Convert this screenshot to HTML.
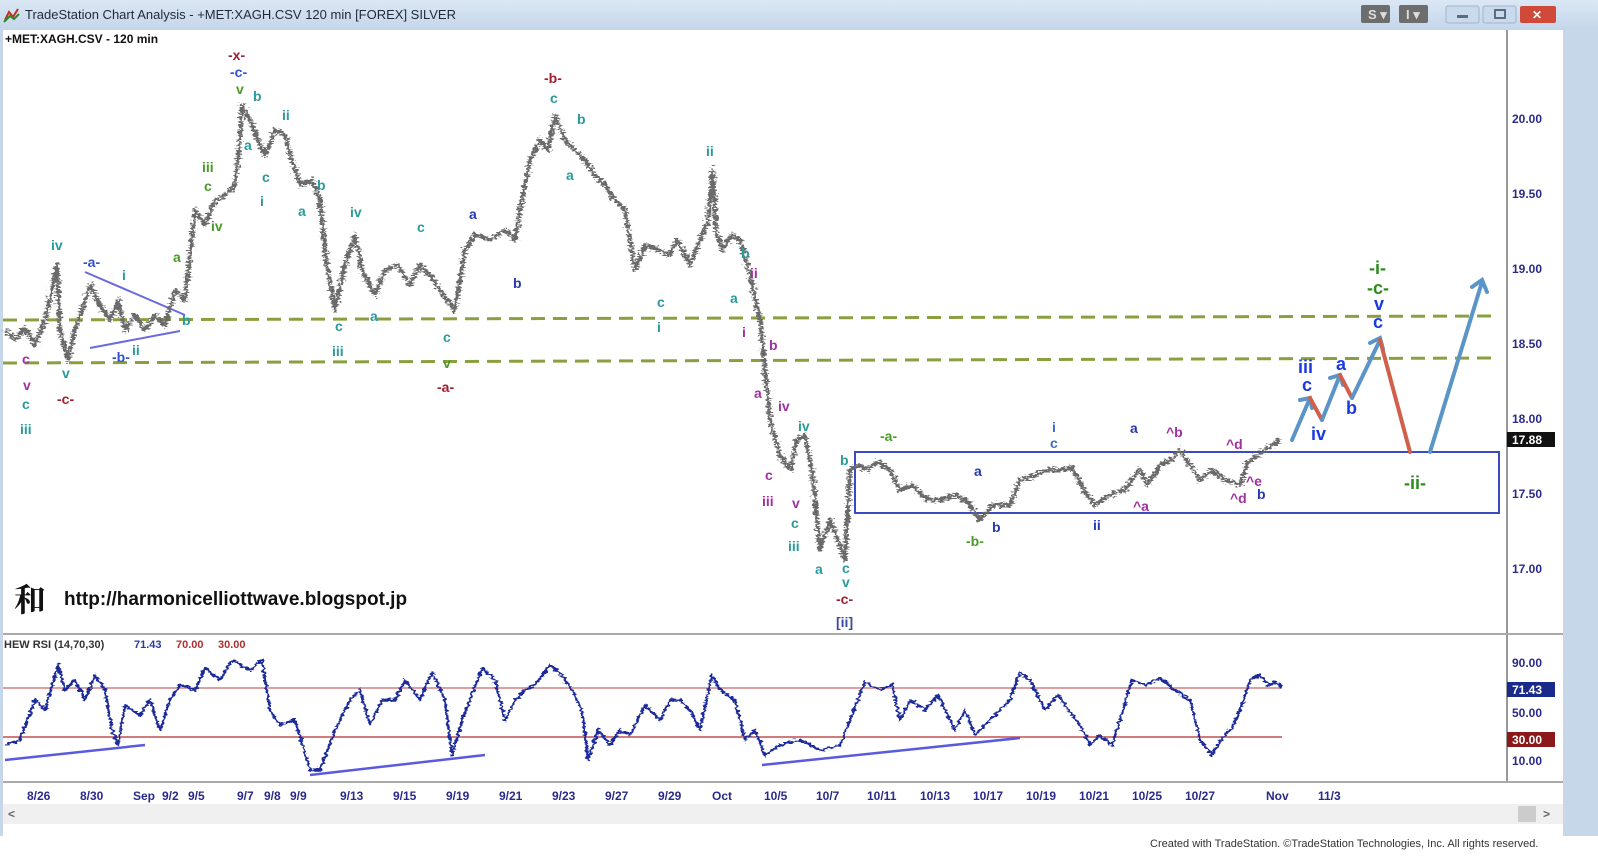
<!DOCTYPE html>
<html><head><meta charset="utf-8"><style>
html,body{margin:0;padding:0;width:1598px;height:866px;overflow:hidden;background:#fff;font-family:"Liberation Sans",Arial,sans-serif}
svg text{font-family:"Liberation Sans",Arial,sans-serif;font-weight:bold}
</style></head><body>
<svg width="1598" height="866" viewBox="0 0 1598 866" xmlns="http://www.w3.org/2000/svg">
<defs>
<linearGradient id="tb" x1="0" y1="0" x2="0" y2="1"><stop offset="0" stop-color="#dbe7f4"/><stop offset="1" stop-color="#c4d6ea"/></linearGradient>
<filter id="jit" x="-5%" y="-10%" width="110%" height="120%"><feTurbulence type="fractalNoise" baseFrequency="0.25 0.6" numOctaves="2" seed="3"/><feDisplacementMap in="SourceGraphic" scale="10" xChannelSelector="R" yChannelSelector="G"/></filter>
<filter id="jit2" x="-5%" y="-10%" width="110%" height="120%"><feTurbulence type="fractalNoise" baseFrequency="0.2 0.4" numOctaves="2" seed="7"/><feDisplacementMap in="SourceGraphic" scale="6" xChannelSelector="R" yChannelSelector="G"/></filter>
</defs>
<rect x="0" y="0" width="1598" height="30" fill="url(#tb)"/>
<path d="M5,20 L9,12 L13,17 L18,9" stroke="#c03020" stroke-width="2" fill="none"/><path d="M4,22 L10,16 L14,19 L19,14" stroke="#2a8a2a" stroke-width="2" fill="none"/>
<text x="25" y="19" font-size="13" fill="#1e2a3a" style="font-weight:normal">TradeStation Chart Analysis - +MET:XAGH.CSV 120 min [FOREX] SILVER</text>
<rect x="1361" y="5" width="29" height="18" rx="2" fill="#6d6d6d"/><text x="1368" y="19" font-size="13" fill="#ddd">S ▾</text>
<rect x="1399" y="5" width="29" height="18" rx="2" fill="#6d6d6d"/><text x="1406" y="19" font-size="13" fill="#ddd">I ▾</text>
<rect x="1446" y="6" width="33" height="17" rx="2" fill="#c9daec" stroke="#9fb4cc"/><rect x="1457" y="15" width="11" height="3" fill="#5a6c84"/>
<rect x="1483" y="6" width="33" height="17" rx="2" fill="#c9daec" stroke="#9fb4cc"/><rect x="1495" y="10" width="10" height="8" fill="none" stroke="#5a6c84" stroke-width="2"/>
<rect x="1520" y="6" width="36" height="17" rx="2" fill="#d04a3a"/><text x="1532" y="19" font-size="12" fill="#fff">✕</text>
<rect x="1563" y="30" width="35" height="806" fill="#c6d7ea"/>
<rect x="0" y="30" width="3" height="806" fill="#c6d7ea"/>
<line x1="1507" y1="30" x2="1507" y2="782" stroke="#999" stroke-width="2"/>
<line x1="3" y1="634" x2="1563" y2="634" stroke="#aaa" stroke-width="2"/>
<line x1="3" y1="782" x2="1563" y2="782" stroke="#aaa" stroke-width="2"/>
<text x="5" y="43" font-size="12" fill="#111">+MET:XAGH.CSV - 120 min</text>
<g font-size="12" fill="#2a2a8a">
<text x="1512" y="123">20.00</text><text x="1512" y="198">19.50</text><text x="1512" y="273">19.00</text><text x="1512" y="348">18.50</text><text x="1512" y="423">18.00</text><text x="1512" y="498">17.50</text><text x="1512" y="573">17.00</text>
<text x="1512" y="667">90.00</text><text x="1512" y="717">50.00</text><text x="1512" y="765">10.00</text>
</g>
<rect x="1507" y="432" width="48" height="15" fill="#111"/><text x="1512" y="444" font-size="12" fill="#fff">17.88</text>
<rect x="1507" y="682" width="48" height="15" fill="#1a2a8a"/><text x="1512" y="694" font-size="12" fill="#fff">71.43</text>
<rect x="1507" y="732" width="48" height="15" fill="#8a1a1a"/><text x="1512" y="744" font-size="12" fill="#fff">30.00</text>
<line x1="3" y1="320" x2="1495" y2="316" stroke="#8aa040" stroke-width="3" stroke-dasharray="14,8"/>
<line x1="3" y1="363" x2="1495" y2="358" stroke="#8aa040" stroke-width="3" stroke-dasharray="14,8"/>
<rect x="855" y="452" width="644" height="61" fill="none" stroke="#3a4ac0" stroke-width="2"/>
<line x1="85" y1="272" x2="185" y2="315" stroke="#6a6ae0" stroke-width="2"/>
<line x1="90" y1="348" x2="180" y2="331" stroke="#6a6ae0" stroke-width="2"/>
<g filter="url(#jit)">
<polyline fill="none" stroke="#6a6a6a" stroke-width="4" stroke-linejoin="round" points="5,330 15,340 25,328 35,345 45,320 57,265 60,330 68,360 75,330 82,310 90,285 100,305 110,320 118,300 125,330 135,315 145,330 155,315 165,325 175,290 185,300 190,255 195,210 205,225 215,200 225,195 235,185 240,140 242,105 250,120 258,140 265,155 275,130 285,135 292,160 300,185 312,180 320,200 326,260 335,310 345,265 355,235 362,270 375,295 385,270 398,265 410,285 420,265 430,275 440,290 455,310 465,250 475,235 490,240 505,230 515,240 522,200 530,160 540,140 548,150 555,115 565,140 575,150 585,160 595,175 605,185 615,200 625,210 635,270 645,245 660,250 670,255 677,240 690,265 700,240 708,220 713,170 716,230 722,250 732,235 740,240 750,275 760,320 765,370 770,420 780,455 790,470 797,440 805,435 812,470 820,550 830,520 838,540 845,560 850,470 858,465 866,470 878,462 890,470 900,490 912,485 925,498 940,500 955,495 968,502 980,520 993,505 1010,505 1020,480 1035,475 1048,470 1060,470 1072,468 1085,492 1095,505 1110,495 1125,490 1135,475 1140,470 1148,485 1160,465 1172,460 1180,450 1190,465 1200,480 1212,470 1225,480 1240,485 1248,462 1258,455 1268,448 1280,440"/>
</g>
<g stroke-width="4" fill="none" stroke-linecap="round">
<polyline points="1292,440 1310,398" stroke="#5b95c8"/><polyline points="1300,400 1310,398 1312,408" stroke="#5b95c8"/>
<polyline points="1310,398 1322,420" stroke="#d0604a"/>
<polyline points="1322,420 1340,375" stroke="#5b95c8"/><polyline points="1330,378 1340,375 1343,385" stroke="#5b95c8"/>
<polyline points="1340,375 1352,398" stroke="#d0604a"/>
<polyline points="1352,398 1380,340" stroke="#5b95c8"/><polyline points="1370,343 1380,338 1383,349" stroke="#5b95c8"/>
<polyline points="1380,340 1410,452" stroke="#d0604a"/>
<polyline points="1430,452 1482,282" stroke="#5b95c8"/><polyline points="1472,287 1482,280 1487,292" stroke="#5b95c8"/>
</g>
<g font-size="14">
<g fill="#a02030"><text x="228" y="60">-x-</text><text x="544" y="83">-b-</text><text x="57" y="404">-c-</text><text x="437" y="392">-a-</text><text x="836" y="604">-c-</text></g>
<g fill="#3050d0"><text x="230" y="77">-c-</text><text x="83" y="267">-a-</text><text x="112" y="362">-b-</text></g>
<g fill="#2a9a9a"><text x="253" y="101">b</text><text x="282" y="120">ii</text><text x="244" y="150">a</text><text x="262" y="182">c</text><text x="260" y="206">i</text><text x="317" y="190">b</text><text x="298" y="216">a</text><text x="350" y="217">iv</text><text x="335" y="331">c</text><text x="332" y="356">iii</text><text x="370" y="321">a</text><text x="417" y="232">c</text><text x="443" y="342">c</text><text x="550" y="103">c</text><text x="577" y="124">b</text><text x="566" y="180">a</text><text x="706" y="156">ii</text><text x="657" y="307">c</text><text x="657" y="332">i</text><text x="741" y="258">b</text><text x="730" y="303">a</text><text x="798" y="431">iv</text><text x="791" y="528">c</text><text x="788" y="551">iii</text><text x="815" y="574">a</text><text x="840" y="465">b</text><text x="842" y="573">c</text><text x="842" y="587">v</text><text x="51" y="250">iv</text><text x="22" y="409">c</text><text x="20" y="434">iii</text><text x="122" y="280">i</text><text x="132" y="355">ii</text><text x="182" y="325">b</text><text x="62" y="378">v</text></g>
<g fill="#4a9a2a"><text x="236" y="94">v</text><text x="202" y="172">iii</text><text x="204" y="191">c</text><text x="211" y="231">iv</text><text x="173" y="262">a</text><text x="443" y="368">v</text><text x="880" y="441">-a-</text><text x="966" y="546">-b-</text></g>
<g fill="#a030a0"><text x="750" y="278">ii</text><text x="742" y="337">i</text><text x="769" y="350">b</text><text x="754" y="398">a</text><text x="778" y="411">iv</text><text x="765" y="480">c</text><text x="762" y="506">iii</text><text x="792" y="508">v</text><text x="22" y="364">c</text><text x="23" y="390">v</text><text x="1166" y="437">^b</text><text x="1226" y="449">^d</text><text x="1133" y="511">^a</text><text x="1230" y="503">^d</text><text x="1246" y="486">^e</text></g>
<g fill="#2838b0"><text x="469" y="219">a</text><text x="513" y="288">b</text><text x="974" y="476">a</text><text x="992" y="532">b</text><text x="1130" y="433">a</text><text x="1093" y="530">ii</text><text x="1257" y="499">b</text><text x="836" y="627" fill="#3a4aa0">[ii]</text></g>
<g fill="#3a6ad0"><text x="1052" y="432">i</text><text x="1050" y="448">c</text></g>
</g>
<g font-size="18" fill="#1a3ae0"><text x="1298" y="373">iii</text><text x="1302" y="391">c</text><text x="1311" y="440">iv</text><text x="1336" y="370">a</text><text x="1346" y="414">b</text><text x="1374" y="310">v</text><text x="1373" y="328">c</text></g>
<g font-size="18" fill="#2a8a1a"><text x="1369" y="274">-i-</text><text x="1367" y="294">-c-</text><text x="1404" y="489">-ii-</text></g>
<text x="14" y="611" font-size="32" fill="#111" style="font-family:'Noto Serif CJK SC',serif">和</text>
<text x="64" y="605" font-size="19" fill="#111">http://harmonicelliottwave.blogspot.jp</text>
<text x="4" y="648" font-size="11" fill="#333">HEW RSI (14,70,30)</text><text x="134" y="648" font-size="11" fill="#2a3aa0">71.43</text><text x="176" y="648" font-size="11" fill="#b03030">70.00</text><text x="218" y="648" font-size="11" fill="#b03030">30.00</text>
<line x1="3" y1="688" x2="1282" y2="688" stroke="#d08080" stroke-width="1.5"/>
<line x1="3" y1="737" x2="1282" y2="737" stroke="#c05050" stroke-width="1.5"/>
<g stroke="#5a5ae0" stroke-width="2.5"><line x1="5" y1="760" x2="145" y2="745"/><line x1="310" y1="775" x2="485" y2="755"/><line x1="762" y1="765" x2="1020" y2="738"/></g>
<g filter="url(#jit2)">
<polyline fill="none" stroke="#1a2a9a" stroke-width="2.5" stroke-linejoin="round" points="5,745 20,740 35,700 45,710 58,665 65,690 75,680 85,700 95,675 105,690 112,730 118,745 125,705 140,715 150,700 160,730 170,700 180,685 195,690 205,668 220,680 232,660 250,670 262,660 270,710 280,725 295,720 310,770 320,770 335,730 350,700 360,690 370,725 382,700 395,700 405,680 420,700 432,672 445,700 452,755 462,720 470,700 482,668 495,680 505,720 515,700 525,690 535,685 550,665 562,675 572,690 582,710 588,760 598,730 610,745 620,730 630,735 645,705 660,720 670,700 680,700 690,710 700,730 712,675 720,690 735,700 745,740 755,730 765,755 780,745 800,740 820,750 840,745 850,720 865,682 880,690 892,685 900,720 910,700 925,710 938,695 955,730 965,710 975,735 985,725 995,715 1010,700 1020,672 1030,680 1045,710 1058,695 1070,712 1080,725 1090,745 1100,735 1112,745 1120,720 1132,680 1145,685 1160,678 1175,690 1190,700 1200,740 1212,755 1222,738 1232,728 1242,705 1250,680 1260,675 1268,685 1276,682 1282,688"/>
</g>
<g font-size="12" fill="#2a2a8a"><text x="27" y="800">8/26</text><text x="80" y="800">8/30</text><text x="133" y="800">Sep</text><text x="162" y="800">9/2</text><text x="188" y="800">9/5</text><text x="237" y="800">9/7</text><text x="264" y="800">9/8</text><text x="290" y="800">9/9</text><text x="340" y="800">9/13</text><text x="393" y="800">9/15</text><text x="446" y="800">9/19</text><text x="499" y="800">9/21</text><text x="552" y="800">9/23</text><text x="605" y="800">9/27</text><text x="658" y="800">9/29</text><text x="712" y="800">Oct</text><text x="764" y="800">10/5</text><text x="816" y="800">10/7</text><text x="867" y="800">10/11</text><text x="920" y="800">10/13</text><text x="973" y="800">10/17</text><text x="1026" y="800">10/19</text><text x="1079" y="800">10/21</text><text x="1132" y="800">10/25</text><text x="1185" y="800">10/27</text><text x="1266" y="800">Nov</text><text x="1318" y="800">11/3</text></g>
<rect x="3" y="804" width="1560" height="20" fill="#f0f0f0"/><text x="8" y="818" font-size="12" fill="#666">&lt;</text><rect x="1518" y="806" width="18" height="16" fill="#ccc"/><text x="1543" y="818" font-size="12" fill="#666">&gt;</text>
<rect x="0" y="836" width="1598" height="30" fill="#fff"/>
<text x="1150" y="847" font-size="11" fill="#333" style="font-weight:normal">Created with TradeStation. ©TradeStation Technologies, Inc. All rights reserved.</text>
</svg>
</body></html>
